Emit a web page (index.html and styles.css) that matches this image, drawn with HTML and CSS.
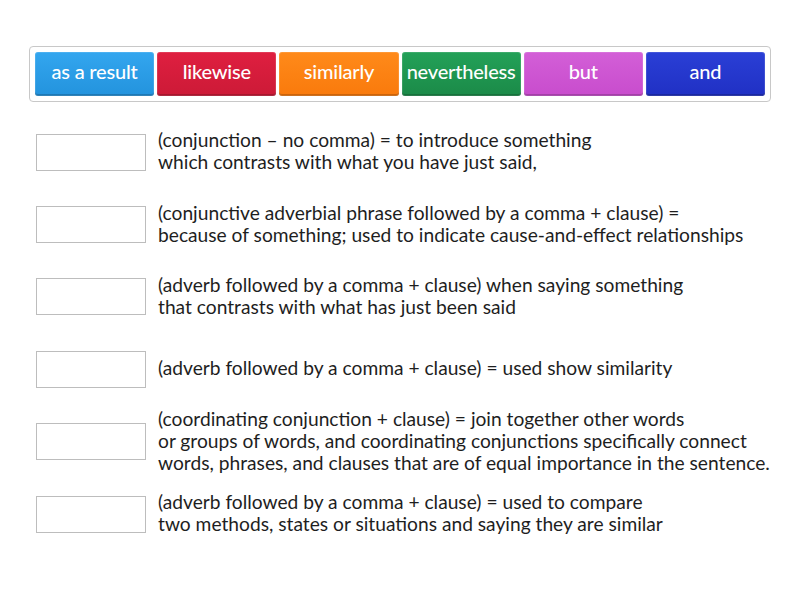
FILE: index.html
```html
<!DOCTYPE html>
<html lang="en">
<head>
<meta charset="utf-8">
<title>Conjunctions match up</title>
<link rel="stylesheet" href="styles.css">
</head>
<body>
<div class="bank">
  <div class="tile blue">as a result</div>
  <div class="tile red">likewise</div>
  <div class="tile orange">similarly</div>
  <div class="tile green">nevertheless</div>
  <div class="tile magenta">but</div>
  <div class="tile navy">and</div>
</div>
<div class="rows">
  <div class="row"><div class="slot"></div><div class="def">(conjunction – no comma) = to introduce something<br>which contrasts with what you have just said,</div></div>
  <div class="row"><div class="slot"></div><div class="def">(conjunctive adverbial phrase followed by a comma + clause) =<br>because of something; used to indicate cause-and-effect relationships</div></div>
  <div class="row"><div class="slot"></div><div class="def">(adverb followed by a comma + clause) when saying something<br>that contrasts with what has just been said</div></div>
  <div class="row"><div class="slot"></div><div class="def">(adverb followed by a comma + clause) = used show similarity</div></div>
  <div class="row"><div class="slot"></div><div class="def">(coordinating conjunction + clause) = join together other words<br>or groups of words, and coordinating conjunctions specifically connect<br>words, phrases, and clauses that are of equal importance in the sentence.</div></div>
  <div class="row"><div class="slot"></div><div class="def">(adverb followed by a comma + clause) = used to compare<br>two methods, states or situations and saying they are similar</div></div>
</div>
</body>
</html>
```
FILE: styles.css
```css
html, body {
  margin: 0;
  padding: 0;
  background: #fff;
}
body {
  font-family: Lato, "Open Sans", "Liberation Sans", sans-serif;
  color: #1e1e1e;
}
.bank {
  box-sizing: border-box;
  width: 742px;
  margin: 46px 0 0 29px;
  padding: 5px;
  border: 1px solid #c8c8c8;
  border-radius: 4px;
  display: flex;
  gap: 3px;
}
.tile {
  box-sizing: border-box;
  flex: 1;
  height: 44px;
  padding-bottom: 6px;
  border-radius: 3px;
  display: flex;
  align-items: center;
  justify-content: center;
  color: #fff;
  font-size: 20px;
  font-weight: 500;
  letter-spacing: -0.2px;
  box-shadow: inset 0 -2px 0 rgba(0,0,0,0.18), inset 0 0 0 1px rgba(255,255,255,0.12);
}
.blue { background: linear-gradient(#33a6ef, #2393dd); }
.red { background: linear-gradient(#df1f40, #cc1a37); }
.orange { background: linear-gradient(#ff8a1a, #f97a0c); }
.green { background: linear-gradient(#23a158, #1b8a48); }
.magenta { background: linear-gradient(#d35fd7, #c84ccd); }
.navy { background: linear-gradient(#2a3fd6, #2030c4); }
.rows {
  margin-top: 14px;
}
.row {
  height: 72.4px;
  display: flex;
  align-items: center;
  padding-left: 36px;
  gap: 12px;
}
.slot {
  box-sizing: border-box;
  flex: none;
  width: 110px;
  height: 37px;
  border: 1px solid #bdbdbd;
  background: #fff;
}
.def {
  font-size: 19.2px;
  line-height: 22px;
  padding-bottom: 2px;
  white-space: nowrap;
}
```
